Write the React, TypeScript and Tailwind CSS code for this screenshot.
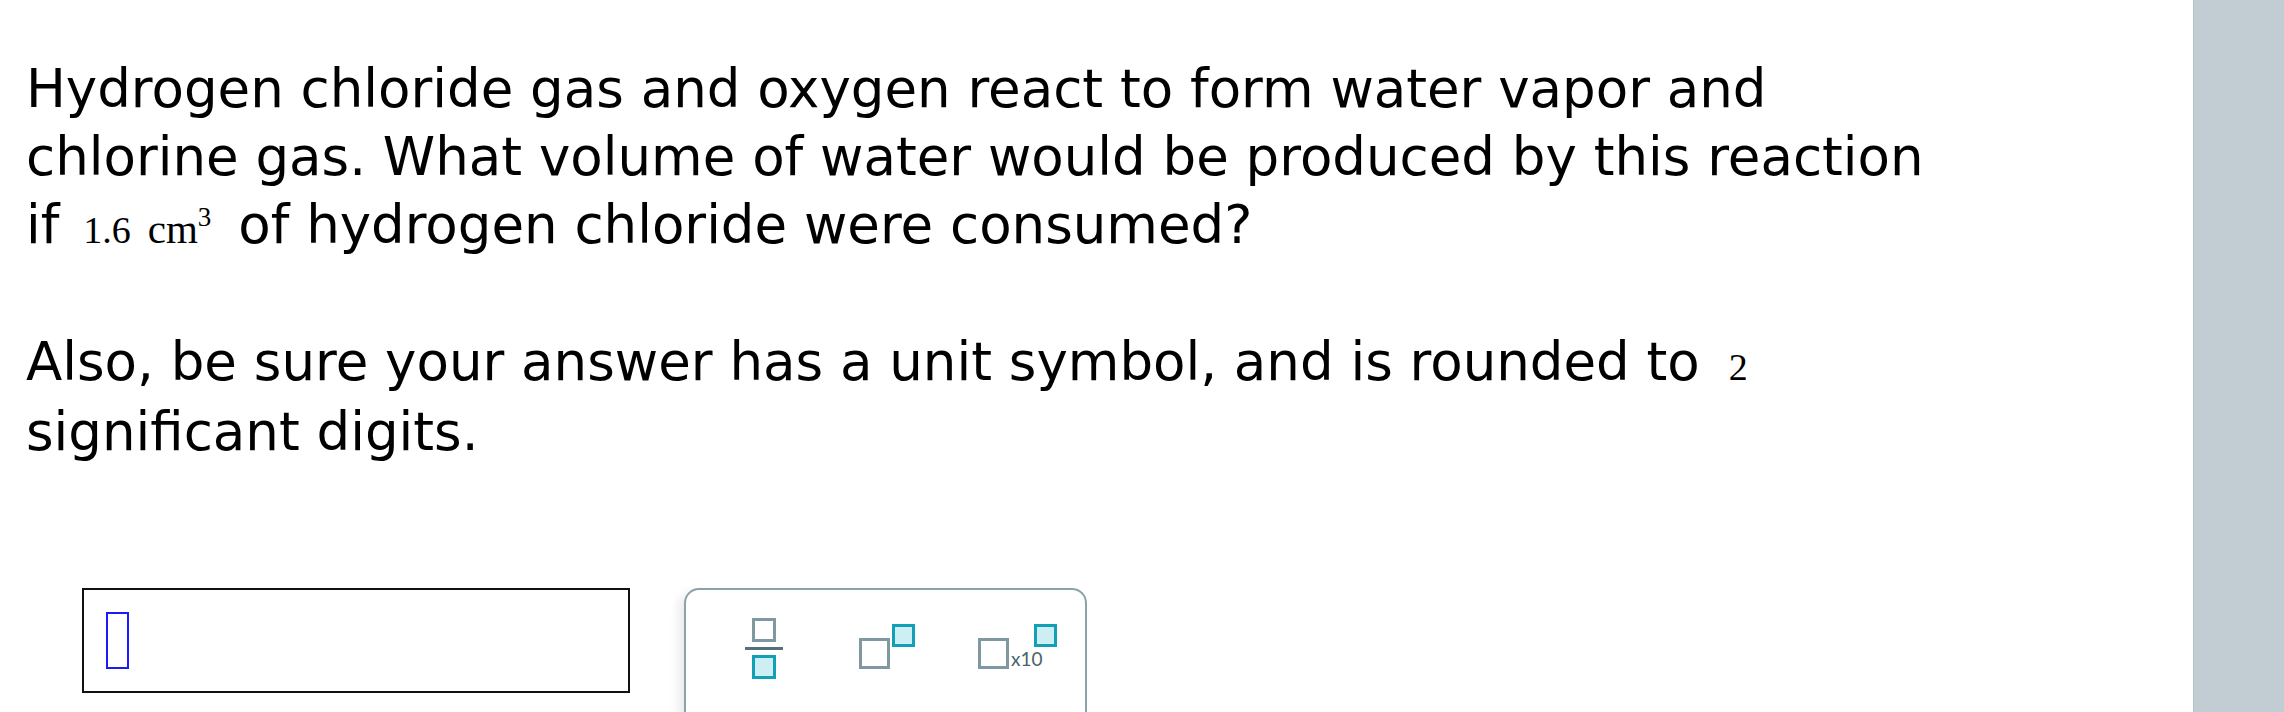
import React from "react";

function GrayBox({ className = "" }: { className?: string }) {
  return <div className={`border-[3px] border-[#7f98a1] bg-white ${className}`} />;
}

function TealBox({ className = "" }: { className?: string }) {
  return <div className={`border-[3px] border-[#12a0b6] bg-[#cdeef3] ${className}`} />;
}

function Palette() {
  return (
    <div className="h-[140px] w-[403px] rounded-t-[15px] border-2 border-b-0 border-[#8aa3ab] bg-white shadow-[-6px_4px_10px_rgba(0,0,0,0.08)]">
      <div className="relative h-full">
        {/* fraction */}
        <div className="absolute left-[59px] top-[28px] flex flex-col items-center">
          <GrayBox className="h-[24px] w-[24px]" />
          <div className="mt-[5px] h-[3px] w-[38px] bg-[#56707a]" />
          <TealBox className="mt-[5px] h-[24px] w-[24px]" />
        </div>
        {/* superscript */}
        <div className="absolute left-[173px] top-[34px] flex items-start">
          <GrayBox className="mt-[14px] h-[31px] w-[31px]" />
          <TealBox className="ml-[2px] h-[23px] w-[23px]" />
        </div>
        {/* x10 */}
        <div className="absolute left-[292px] top-[34px] flex items-start">
          <GrayBox className="mt-[14px] h-[31px] w-[31px]" />
          <span className="mt-[25px] ml-[2px] font-['Lato',sans-serif] text-[19px] leading-[20px] text-[#48636d]">
            x10
          </span>
          <TealBox className="-ml-[9px] h-[23px] w-[23px]" />
        </div>
      </div>
    </div>
  );
}

export default function App() {
  return (
    <div className="flex h-[712px] w-[2284px] overflow-hidden bg-white">
      <main className="flex-1 pl-[26px] pt-[55px] font-['DejaVu_Sans',Verdana,sans-serif] text-[53px] leading-[68px] text-black">
        <p className="whitespace-nowrap">
          Hydrogen chloride gas and oxygen react to form water vapor and
          <br />
          chlorine gas. What volume of water would be produced by this reaction
          <br />
          if{" "}
          <span className="ml-[7px] font-['Liberation_Serif',serif] text-[38px] leading-none">
            1.6<span className="ml-[17px] text-[41px]">cm</span>
            <sup className="relative -top-[17px] align-baseline text-[27px] leading-none">3</sup>
          </span>{" "}
          <span className="ml-[10px]">of hydrogen chloride were consumed?</span>
        </p>
        <p className="mt-[68px] whitespace-nowrap leading-[70px]">
          Also, be sure your answer has a unit symbol, and is rounded to{" "}
          <span className="ml-[12px] font-['Liberation_Serif',serif] text-[38px] leading-none">2</span>
          <br />
          significant digits.
        </p>
        <div className="ml-[56px] mt-[121px] flex items-start gap-[54px]">
          <div className="h-[105px] w-[548px] border-2 border-[#111] bg-white pl-[22px] pt-[22px]">
            <div className="h-[57px] w-[23px] border-2 border-[#1a1aff]" />
          </div>
          <Palette />
        </div>
      </main>
      <aside className="h-full w-[91px] shrink-0 border-l border-[#b3c0c6] bg-[#c1cdd3]" />
    </div>
  );
}
